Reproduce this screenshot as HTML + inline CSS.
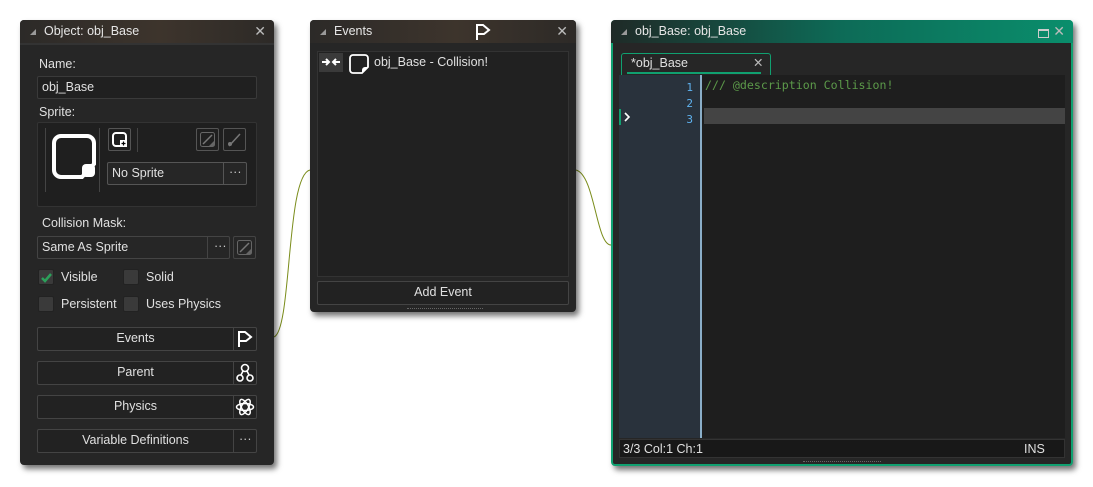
<!DOCTYPE html>
<html><head><style>
body{margin:0;width:1093px;height:487px;background:#fff;position:relative;overflow:hidden;font-family:"Liberation Sans",sans-serif;font-size:12.5px;color:#ddd}
.a{position:absolute;box-sizing:border-box}
.panel{background:#262626;border-radius:4px;box-shadow:3px 4px 6px rgba(0,0,0,.55)}
.tb{position:absolute;left:0;right:0;top:0;height:23px;border-radius:4px 4px 0 0;background:linear-gradient(90deg,#2c2a28,#3d342c 55%,#2d2a27);color:#e6e6e6;font-size:12.5px;line-height:23px}
.tb .t{position:absolute;left:24px}
.tb .tri{position:absolute;left:10px;top:9px;width:0;height:0;border-left:6px solid transparent;border-bottom:6px solid #999}
.tb .x{position:absolute;right:8px;top:0;color:#bbb;font-size:14px}
.inp{background:#202020;border:1px solid #3a3a3a;border-radius:2px;padding-left:4px;line-height:20px;color:#e0e0e0}
.btn{background:#222;border:1px solid #444;border-radius:2px;text-align:center;color:#e0e0e0;line-height:21px}
.cb{width:16px;height:16px;background:#3a3a3a;border:1px solid #222;border-radius:2px}
.lbl{color:#e0e0e0}
</style></head><body>
<svg class="a" style="left:0;top:0" width="1093" height="487"><path d="M274 337 C292 330,286 175,310 170" stroke="#7a8c1a" fill="none" stroke-width="1"/><path d="M576 170 C595 175,596 245,611 245" stroke="#7a8c1a" fill="none" stroke-width="1"/></svg>

<!-- Panel 1 -->
<div class="a panel" style="left:20px;top:20px;width:254px;height:445px">
 <div class="tb"><div class="tri"></div><span class="t">Object: obj_Base</span><span class="x">✕</span></div>
 <div class="a" style="left:0;right:0;top:23px;height:2px;background:#333"></div>
 <div class="a lbl" style="left:19px;top:37px">Name:</div>
 <div class="a inp" style="left:17px;top:56px;width:220px;height:23px">obj_Base</div>
 <div class="a lbl" style="left:19px;top:85px">Sprite:</div>
 <div class="a" style="left:17px;top:102px;width:220px;height:85px;background:#1f1f1f;border:1px solid #333;border-radius:2px"></div>
 <div class="a" style="left:25px;top:108px;width:55px;height:64px;border-left:1px solid #444;border-right:1px solid #444"></div>
 <svg class="a" style="left:32px;top:114px" width="44" height="45"><path d="M9 2 H35 A7 7 0 0 1 42 9 V30 L30 43 H9 A7 7 0 0 1 2 36 V9 A7 7 0 0 1 9 2Z" fill="none" stroke="#fff" stroke-width="4"/><path d="M42 30 L30 43 V36 A6 6 0 0 1 36 30Z" fill="#fff"/><rect x="30" y="30" width="13" height="13" rx="4" fill="#fff"/></svg>
 <div class="a" style="left:88px;top:108px;width:23px;height:23px;border:1px solid #555;border-radius:2px"></div>
 <svg class="a" style="left:92px;top:112px" width="16" height="16"><rect x="1" y="1" width="13" height="13" rx="3" fill="none" stroke="#fff" stroke-width="2"/><rect x="8" y="8" width="7" height="7" fill="#fff"/><path d="M11.5 9.5v4M9.5 11.5h4" stroke="#000" stroke-width="1.2"/></svg>
 <div class="a" style="left:117px;top:108px;width:1px;height:24px;background:#444"></div>
 <div class="a" style="left:176px;top:108px;width:23px;height:23px;border:1px solid #555;border-radius:2px"></div>
 <svg class="a" style="left:179px;top:111px" width="17" height="17"><rect x="1.5" y="1.5" width="14" height="14" rx="2" fill="none" stroke="#666"/><path d="M4 13 L13 4" stroke="#777" stroke-width="1.5"/><path d="M10 15 H15 V10Z" fill="#666"/></svg>
 <div class="a" style="left:203px;top:108px;width:23px;height:23px;border:1px solid #555;border-radius:2px"></div>
 <svg class="a" style="left:206px;top:111px" width="17" height="17"><path d="M3 15 L14 3" stroke="#777" stroke-width="1.5"/><circle cx="4" cy="13" r="2" fill="#777"/></svg>
 <div class="a inp" style="left:87px;top:142px;width:140px;height:23px;background:#262626;border-color:#555">No Sprite</div>
 <div class="a" style="left:203px;top:142px;width:1px;height:23px;background:#555"></div>
 <div class="a" style="left:209px;top:142px;color:#ccc;line-height:20px">···</div>
 <div class="a lbl" style="left:22px;top:196px">Collision Mask:</div>
 <div class="a inp" style="left:17px;top:216px;width:193px;height:23px;background:#262626;border-color:#444">Same As Sprite</div>
 <div class="a" style="left:187px;top:216px;width:1px;height:23px;background:#444"></div>
 <div class="a" style="left:194px;top:216px;color:#ccc;line-height:21px">···</div>
 <div class="a" style="left:213px;top:216px;width:23px;height:23px;border:1px solid #444;border-radius:2px"></div>
 <svg class="a" style="left:216px;top:219px" width="17" height="17"><rect x="1.5" y="1.5" width="14" height="14" rx="2" fill="none" stroke="#666"/><path d="M4 13 L13 4" stroke="#777" stroke-width="1.5"/><path d="M10 15 H15 V10Z" fill="#666"/></svg>
 <div class="a cb" style="left:18px;top:249px"></div>
 <svg class="a" style="left:20px;top:251px" width="13" height="13"><path d="M2 7 L5 10 L11 3" stroke="#2ca05a" stroke-width="2.5" fill="none"/></svg>
 <div class="a lbl" style="left:41px;top:250px">Visible</div>
 <div class="a cb" style="left:103px;top:249px"></div><div class="a lbl" style="left:126px;top:250px">Solid</div>
 <div class="a cb" style="left:18px;top:276px"></div><div class="a lbl" style="left:41px;top:277px">Persistent</div>
 <div class="a cb" style="left:103px;top:276px"></div><div class="a lbl" style="left:126px;top:277px">Uses Physics</div>
 <div class="a btn" style="left:17px;top:307px;width:220px;height:24px;padding-right:23px">Events</div>
 <div class="a" style="left:213px;top:307px;width:1px;height:24px;background:#444"></div>
 <svg class="a" style="left:216px;top:310px" width="18" height="18"><path d="M3 17 V2 H9 L15 7 L10 11 H3" fill="none" stroke="#fff" stroke-width="2"/></svg>
 <div class="a btn" style="left:17px;top:341px;width:220px;height:24px;padding-right:23px">Parent</div>
 <div class="a" style="left:213px;top:341px;width:1px;height:24px;background:#444"></div>
 <svg class="a" style="left:215px;top:343px" width="20" height="20"><circle cx="10" cy="5" r="3.5" fill="none" stroke="#fff" stroke-width="1.6"/><circle cx="5" cy="15" r="3" fill="none" stroke="#fff" stroke-width="1.6"/><circle cx="15" cy="15" r="3" fill="none" stroke="#fff" stroke-width="1.6"/><path d="M8 8 L6 12 M12 8 L14 12" stroke="#fff" stroke-width="1.6"/></svg>
 <div class="a btn" style="left:17px;top:375px;width:220px;height:24px;padding-right:23px">Physics</div>
 <div class="a" style="left:213px;top:375px;width:1px;height:24px;background:#444"></div>
 <svg class="a" style="left:215px;top:377px" width="20" height="20" fill="none" stroke="#fff" stroke-width="1.5"><ellipse cx="10" cy="10" rx="8.5" ry="3.5"/><ellipse cx="10" cy="10" rx="8.5" ry="3.5" transform="rotate(60 10 10)"/><ellipse cx="10" cy="10" rx="8.5" ry="3.5" transform="rotate(-60 10 10)"/></svg>
 <div class="a btn" style="left:17px;top:409px;width:220px;height:24px;padding-right:23px">Variable Definitions</div>
 <div class="a" style="left:213px;top:409px;width:1px;height:24px;background:#444"></div><div class="a" style="left:219px;top:409px;color:#ccc;line-height:21px">···</div>
</div>

<!-- Panel 2 -->
<div class="a panel" style="left:310px;top:20px;width:266px;height:292px">
 <div class="tb"><div class="tri"></div><span class="t">Events</span><span class="x">✕</span></div>
 <svg class="a" style="left:164px;top:3px" width="18" height="18"><path d="M3 17 V2 H9 L15 7 L10 11 H3" fill="none" stroke="#fff" stroke-width="2"/></svg>
 <div class="a" style="left:7px;top:31px;width:252px;height:226px;background:#212121;border:1px solid #333"></div>
 <div class="a" style="left:9px;top:33px;width:24px;height:19px;background:#3a3a3a"></div>
 <svg class="a" style="left:11px;top:36px" width="20" height="12" stroke="#fff" stroke-width="2" fill="none"><path d="M1 6 H8 M5 3 L8 6 L5 9 M19 6 H12 M15 3 L12 6 L15 9"/></svg>
 <svg class="a" style="left:38px;top:33px" width="22" height="22"><path d="M5 2 H17 A3 3 0 0 1 20 5 V14 L14 20 H5 A3 3 0 0 1 2 17 V5 A3 3 0 0 1 5 2Z" fill="none" stroke="#fff" stroke-width="1.8"/><path d="M20 14 L14 20 V17 A3 3 0 0 1 17 14Z" fill="#fff"/></svg>
 <div class="a lbl" style="left:64px;top:35px">obj_Base - Collision!</div>
 <div class="a btn" style="left:7px;top:261px;width:252px;height:24px">Add Event</div>
 <div class="a" style="left:97px;top:288px;width:76px;height:3px;border-top:1px dotted #666"></div>
</div>

<!-- Panel 3 -->
<div class="a panel" style="left:611px;top:20px;width:462px;height:446px;border:2px solid #10a070;background:#262626">
 <div class="tb" style="top:-2px;left:-2px;right:-2px;background:linear-gradient(90deg,#1f2a27,#0d6b57 50%,#0a8e6c)"><div class="tri"></div><span class="t">obj_Base: obj_Base</span><span class="x">✕</span></div>
 <div class="a" style="left:425px;top:7px;width:11px;height:9px;border:1px solid #ccc;border-top-width:2px"></div>
 <div class="a" style="left:8px;top:31px;width:150px;height:22px;border:1px solid #10a070;border-bottom:none;border-radius:3px 3px 0 0;background:#262626"></div>
 <div class="a lbl" style="left:18px;top:34px">*obj_Base</div><div class="a" style="left:140px;top:33px;color:#bbb">✕</div>
 <div class="a" style="left:14px;top:50px;width:134px;height:2px;background:#10a070"></div>
 <div class="a" style="left:6px;top:53px;width:81px;height:363px;background:#29323c"></div>
 <div class="a" style="left:87px;top:53px;width:2px;height:363px;background:#8aaec8"></div>
 <div class="a" style="left:89px;top:53px;width:363px;height:363px;background:#1e1e1e"></div>
 <div class="a" style="left:6px;top:87px;width:2px;height:16px;background:#10a070"></div>
 <svg class="a" style="left:10px;top:90px" width="8" height="10"><path d="M2 1 L6 5 L2 9" stroke="#fff" stroke-width="1.6" fill="none"/></svg>
 <div class="a" style="left:60px;top:58px;color:#5fb3f0;font:11px 'DejaVu Sans Mono',monospace;line-height:16px;text-align:right;width:20px">1<br>2<br>3</div>
 <div class="a" style="left:91px;top:86px;width:361px;height:16px;background:#444"></div>
 <div class="a" style="left:92px;top:56px;color:#5c9a4a;font:11.6px 'DejaVu Sans Mono','Liberation Mono',monospace">/// @description Collision!</div>
 <div class="a" style="left:6px;top:417px;width:446px;height:19px;background:#181818;border:1px solid #333"></div>
 <div class="a lbl" style="left:10px;top:420px">3/3 Col:1 Ch:1</div>
 <div class="a lbl" style="left:411px;top:420px">INS</div>
 <div class="a" style="left:190px;top:439px;width:78px;height:3px;border-top:1px dotted #666"></div>
</div>
</body></html>
